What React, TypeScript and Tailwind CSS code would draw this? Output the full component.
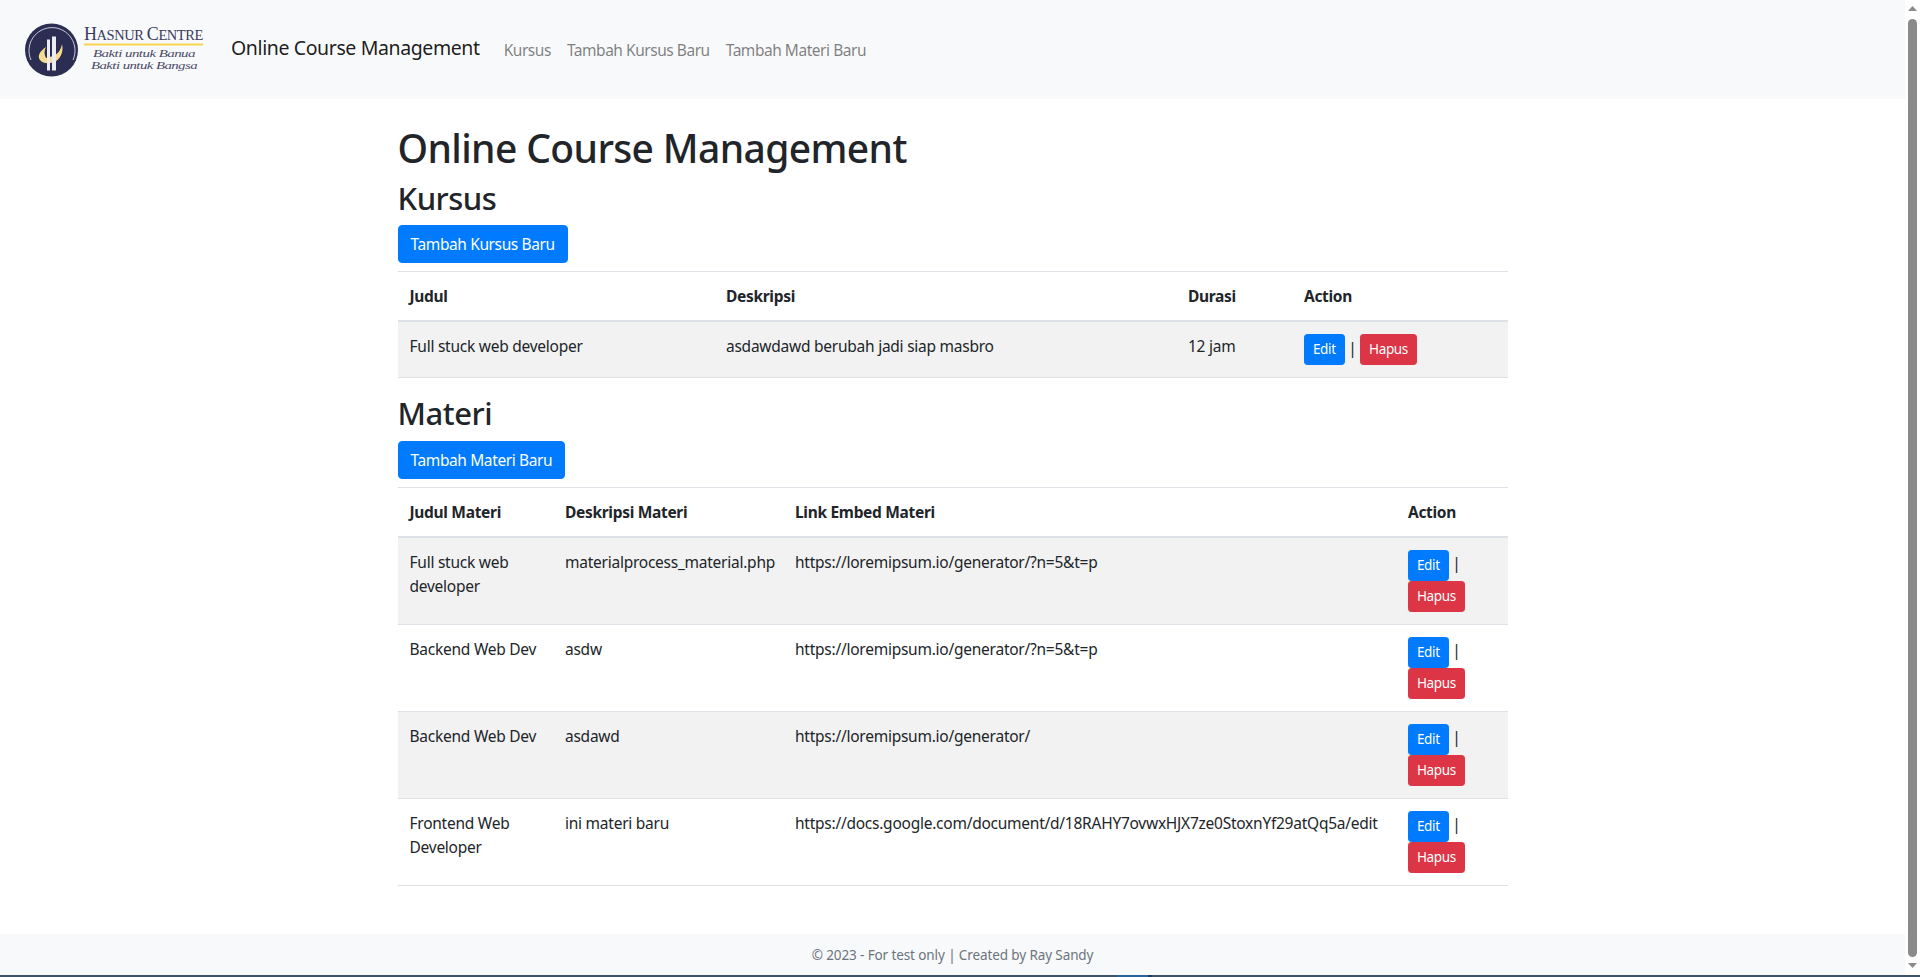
import type { ReactNode } from "react";

const kursus = [{ judul: "Full stuck web developer", deskripsi: "asdawdawd berubah jadi siap masbro", durasi: "12 jam" }];

const materi = [
  { judul: "Full stuck web developer", deskripsi: "materialprocess_material.php", link: "https://loremipsum.io/generator/?n=5&t=p" },
  { judul: "Backend Web Dev", deskripsi: "asdw", link: "https://loremipsum.io/generator/?n=5&t=p" },
  { judul: "Backend Web Dev", deskripsi: "asdawd", link: "https://loremipsum.io/generator/" },
  { judul: "Frontend Web Developer", deskripsi: "ini materi baru", link: "https://docs.google.com/document/d/18RAHY7ovwxHJX7ze0StoxnYf29atQq5a/edit" },
];

function Logo() {
  return (
    <svg width="184" height="56" viewBox="0 0 184 56" className="shrink-0">
      <circle cx="27.5" cy="28" r="26.5" fill="#2b2d52" />
      <path d="M7 38A23 23 0 1 1 49 38" fill="none" stroke="#c9c9d8" strokeWidth="1" />
      <path d="M22 25C16 29 13 34 16 38C19 42 25 42 30 40C36 38 40 30 38 22C37 28 33 33 29 34L22 36C20 32 20 29 22 25Z" fill="#f7dc8f" />
      <rect x="23" y="17.5" width="3" height="31" fill="#eceaf2" />
      <rect x="28" y="14.5" width="4" height="34" fill="#eceaf2" />
      <text x="60" y="17.5" fontFamily="Liberation Serif" fontSize="18" fill="#3a3a5e" textLength="119" lengthAdjust="spacingAndGlyphs">
        H<tspan fontSize="14.5">ASNUR </tspan>C<tspan fontSize="14.5">ENTRE</tspan>
      </text>
      <rect x="60" y="21.5" width="119" height="2" fill="#fcd34d" />
      <text x="69" y="34.5" fontFamily="Liberation Serif" fontStyle="italic" fontSize="10.5" fill="#4a4a68" textLength="102" lengthAdjust="spacingAndGlyphs">Bakti untuk Banua</text>
      <text x="67" y="46.5" fontFamily="Liberation Serif" fontStyle="italic" fontSize="10.5" fill="#4a4a68" textLength="106" lengthAdjust="spacingAndGlyphs">Bakti untuk Bangsa</text>
    </svg>
  );
}

function Btn({ children, red }: { children: ReactNode; red?: boolean }) {
  return (
    <button className={`inline-block rounded-[3.2px] border px-2 py-1 align-middle text-[13.5px] leading-[21px] text-white ${red ? "border-[#dc3545] bg-[#dc3545]" : "border-[#007bff] bg-[#007bff]"}`}>
      {children}
    </button>
  );
}

function Aksi() {
  return (
    <span className="tracking-[-0.025em]">
      <Btn>Edit</Btn> | <Btn red>Hapus</Btn>
    </span>
  );
}

function Th({ children, w }: { children: ReactNode; w: string }) {
  return <th className={`${w} border-t border-b-2 border-t-[#dee2e6] border-b-[#dee2e6] p-3 text-left font-bold tracking-[-0.02em]`}>{children}</th>;
}

function Td({ children }: { children: ReactNode }) {
  return <td className="border-t border-b border-[#dee2e6] p-3 align-top tracking-[-0.016em]">{children}</td>;
}

function Btn2({ children }: { children: ReactNode }) {
  return (
    <button className="block h-[38px] rounded border border-[#007bff] bg-[#007bff] px-3 text-white">
      {children}
    </button>
  );
}

export default function App() {
  return (
    <div className="flex h-[977px] flex-col overflow-hidden bg-white font-['Noto_Sans',sans-serif] text-[15.5px] leading-6 tracking-[-0.025em] text-[#212529]">
      <div className="flex min-h-0 flex-1">
        <div className="flex min-w-0 flex-1 flex-col">
          <nav className="flex h-[99px] items-center bg-[#f8f9fa] pl-[24px]">
            <Logo />
            <a className="mb-1 ml-[23px] text-[19.5px] tracking-[-0.02em] text-black/90">Online Course Management</a>
            <ul className="ml-[16px] flex tracking-[-0.03em]">
              <li className="px-2 text-black/50">Kursus</li>
              <li className="px-2 text-black/50">Tambah Kursus Baru</li>
              <li className="px-2 text-black/50">Tambah Materi Baru</li>
            </ul>
          </nav>

          <main className="mx-auto w-[1110px] flex-1 pt-[24px]">
            <h1 className="mb-[7px] pt-px text-[39px] leading-[48px] font-medium tracking-[-0.016em]">Online Course Management</h1>
            <h2 className="mb-2 text-[31px] leading-[38.4px] font-medium tracking-[-0.015em]">Kursus</h2>
            <Btn2>Tambah Kursus Baru</Btn2>
            <table className="mt-2 mb-4 w-full table-fixed border-collapse">
              <thead>
                <tr>
                  <Th w="w-[316.5px]">Judul</Th>
                  <Th w="w-[462px]">Deskripsi</Th>
                  <Th w="w-[116px]">Durasi</Th>
                  <Th w="w-[215.5px]">Action</Th>
                </tr>
              </thead>
              <tbody>
                {kursus.map((k) => (
                  <tr key={k.judul} className="bg-[#f2f2f2]">
                    <Td>{k.judul}</Td>
                    <Td>{k.deskripsi}</Td>
                    <Td>{k.durasi}</Td>
                    <Td><Aksi /></Td>
                  </tr>
                ))}
              </tbody>
            </table>

            <h2 className="mb-2 text-[31px] leading-[38.4px] font-medium tracking-[-0.015em]">Materi</h2>
            <Btn2>Tambah Materi Baru</Btn2>
            <table className="mt-2 w-full table-fixed border-collapse">
              <thead>
                <tr>
                  <Th w="w-[155.5px]">Judul Materi</Th>
                  <Th w="w-[230px]">Deskripsi Materi</Th>
                  <Th w="w-[613px]">Link Embed Materi</Th>
                  <Th w="w-[111.5px]">Action</Th>
                </tr>
              </thead>
              <tbody>
                {materi.map((m, i) => (
                  <tr key={i} className={i % 2 === 0 ? "bg-[#f2f2f2]" : ""}>
                    <Td>{m.judul}</Td>
                    <Td>{m.deskripsi}</Td>
                    <Td>{m.link}</Td>
                    <Td><Aksi /></Td>
                  </tr>
                ))}
              </tbody>
            </table>
          </main>

          <footer className="flex h-[41px] items-center justify-center bg-[#f8f9fa] text-[13.5px] tracking-[-0.008em] text-[#6c757d]">
            © 2023 - For test only | Created by Ray Sandy
          </footer>
        </div>

        {/* scrollbar */}
        <div className="flex w-[15px] flex-col items-center bg-white">
          <svg width="9" height="5" viewBox="0 0 9 5" className="mt-[6px] shrink-0"><path d="M4.5 0 9 5H0Z" fill="#8a8a8a" /></svg>
          <div className="mt-2 w-[9px] flex-1 rounded-full bg-[#8a8a8a]" />
          <svg width="9" height="5" viewBox="0 0 9 5" className="mt-[6px] mb-[7px] shrink-0"><path d="M0 0h9L4.5 5Z" fill="#8a8a8a" /></svg>
        </div>
      </div>
      {/* sliver of the taskbar at the bottom edge */}
      <div className="flex h-[2px] bg-[#3d5368] pl-[1117px]">
        <div className="w-[31px] bg-[#28639c]" />
        <div className="w-[4px] bg-[#1d3b5c]" />
      </div>
    </div>
  );
}
